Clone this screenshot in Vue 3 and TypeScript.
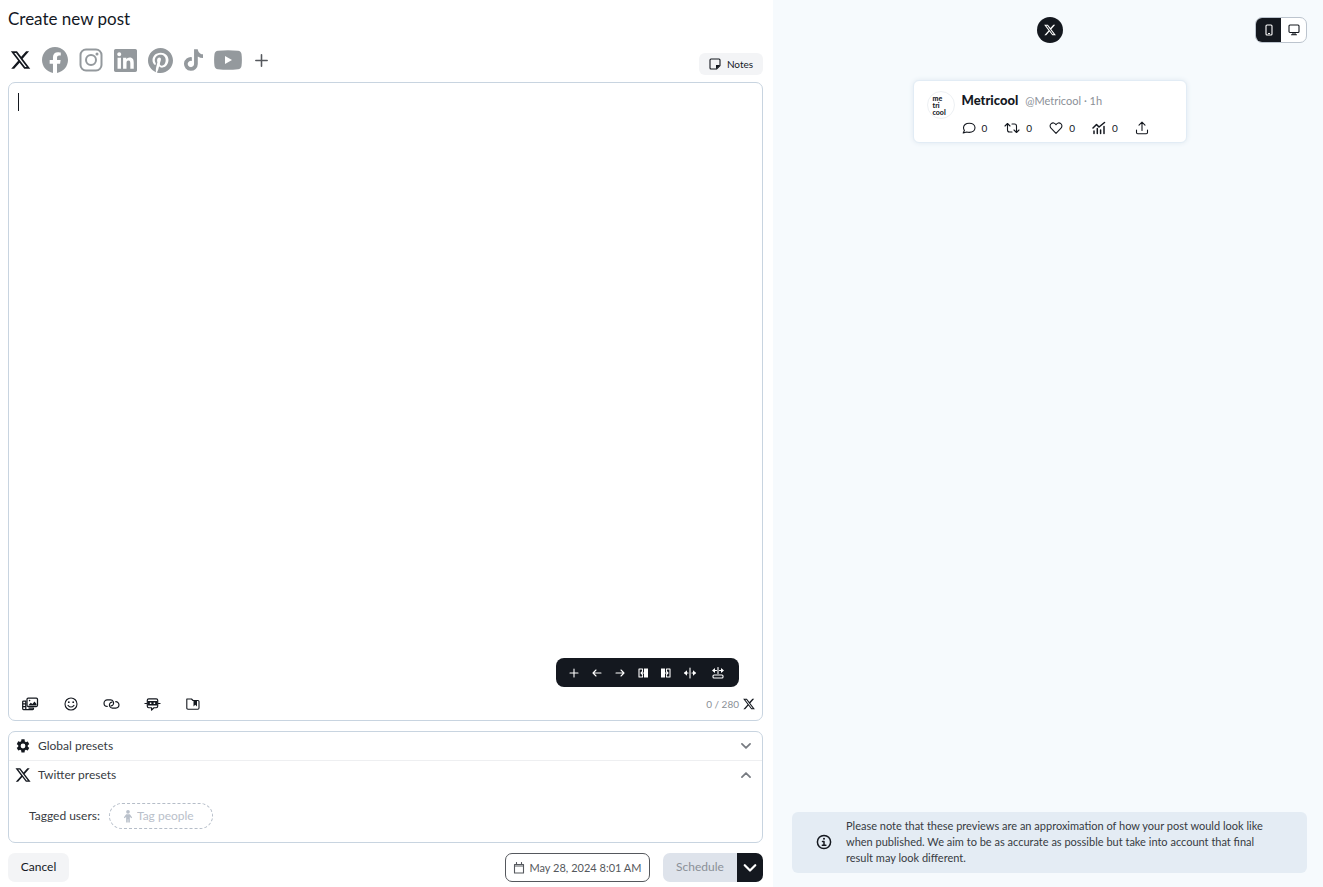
<script setup lang="ts">
import { ref } from 'vue'

interface Network {
  id: string
  label: string
  width: number
  height: number
}

interface Tool {
  id: string
  label: string
  width: number
}

const networks: Network[] = [
  { id: 'x', label: 'X', width: 21, height: 18 },
  { id: 'facebook', label: 'Facebook', width: 26, height: 26 },
  { id: 'instagram', label: 'Instagram', width: 24, height: 24 },
  { id: 'linkedin', label: 'LinkedIn', width: 23, height: 23 },
  { id: 'pinterest', label: 'Pinterest', width: 25, height: 25 },
  { id: 'tiktok', label: 'TikTok', width: 19, height: 22 },
  { id: 'youtube', label: 'YouTube', width: 28, height: 20 },
]

const threadTools: Tool[] = [
  { id: 'plus', label: 'Add post', width: 12 },
  { id: 'left', label: 'Previous post', width: 12 },
  { id: 'right', label: 'Next post', width: 12 },
  { id: 'merge-left', label: 'Merge with previous', width: 12 },
  { id: 'merge-right', label: 'Merge with next', width: 12 },
  { id: 'split', label: 'Split post', width: 14 },
  { id: 'split-all', label: 'Split automatically', width: 14 },
]

const insertTools: Tool[] = [
  { id: 'media', label: 'Media', width: 18 },
  { id: 'smile', label: 'Emoji', width: 16 },
  { id: 'link', label: 'Link', width: 17 },
  { id: 'robot', label: 'Assistant', width: 17 },
  { id: 'folder', label: 'Library', width: 16 },
]

const stats = [
  { id: 'comment', label: 'Replies', count: 0 },
  { id: 'repost', label: 'Reposts', count: 0 },
  { id: 'heart', label: 'Likes', count: 0 },
  { id: 'views', label: 'Views', count: 0 },
]

const selected = ref('x')
const text = ref('')
const tagged = ref('')
const device = ref<'mobile' | 'desktop'>('mobile')
const globalOpen = ref(false)
const twitterOpen = ref(true)
</script>

<template>
  <svg class="sprite" aria-hidden="true">
    <symbol id="x" viewBox="1 2 22 20"><path fill="currentColor" d="M18.244 2.25h3.308l-7.227 8.26 8.502 11.24H16.17l-5.214-6.817L4.99 21.75H1.68l7.73-8.835L1.254 2.25H8.08l4.713 6.231zm-1.161 17.52h1.833L7.084 4.126H5.117z" /></symbol>
    <symbol id="facebook" viewBox="0 0 24 24"><path fill="currentColor" d="M24 12.073c0-6.627-5.373-12-12-12s-12 5.373-12 12c0 5.99 4.388 10.954 10.125 11.854v-8.385H7.078v-3.47h3.047V9.43c0-3.007 1.792-4.669 4.533-4.669 1.312 0 2.686.235 2.686.235v2.953H15.83c-1.491 0-1.956.925-1.956 1.874v2.25h3.328l-.532 3.47h-2.796v8.385C19.612 23.027 24 18.062 24 12.073z" /></symbol>
    <symbol id="instagram" viewBox="0 0 24 24">
      <rect x="1.500" y="1.500" width="21" height="21" rx="5.500" fill="none" stroke="currentColor" stroke-width="2" />
      <circle cx="12" cy="12" r="5" fill="none" stroke="currentColor" stroke-width="2" />
      <circle cx="18" cy="6" r="1.500" fill="currentColor" />
    </symbol>
    <symbol id="linkedin" viewBox="0 32 448 448"><path fill="currentColor" d="M416 32H31.9C14.3 32 0 46.5 0 64.3v383.4C0 465.5 14.3 480 31.9 480H416c17.6 0 32-14.5 32-32.3V64.3c0-17.8-14.4-32.3-32-32.3zM135.4 416H69V202.2h66.5V416zm-33.2-243c-21.3 0-38.5-17.3-38.5-38.5S80.9 96 102.2 96c21.2 0 38.5 17.3 38.5 38.5 0 21.3-17.2 38.5-38.5 38.5zm282.1 243h-66.4V312c0-24.8-.5-56.7-34.5-56.7-34.6 0-39.9 27-39.9 54.9V416h-66.4V202.2h63.7v29.2h.9c8.9-16.8 30.6-34.5 62.9-34.5 67.2 0 79.7 44.3 79.7 101.9V416z" /></symbol>
    <symbol id="pinterest" viewBox="0 8 496 496"><path fill="currentColor" d="M496 256c0 137-111 248-248 248-25.6 0-50.2-3.9-73.4-11.1 10.1-16.5 25.2-43.5 30.8-65 3-11.6 15.4-59 15.4-59 8.1 15.4 31.7 28.5 56.8 28.5 74.8 0 128.7-68.8 128.7-154.3 0-81.9-66.9-143.2-152.9-143.2-107 0-163.9 71.8-163.9 150.1 0 36.4 19.4 81.7 50.3 96.1 4.7 2.2 7.2 1.2 8.3-3.3.8-3.4 5-20.3 6.9-28.1.6-2.5.3-4.7-1.7-7.1-10.1-12.5-18.3-35.3-18.3-56.6 0-54.7 41.4-107.6 112-107.6 60.9 0 103.6 41.5 103.6 100.9 0 67.1-33.9 113.6-78 113.6-24.3 0-42.6-20.1-36.7-44.8 7-29.5 20.5-61.3 20.5-82.6 0-19-10.2-34.9-31.4-34.9-24.9 0-44.9 25.7-44.9 60.2 0 22 7.4 36.8 7.4 36.8s-24.5 103.8-29 123.2c-5 21.4-3 51.6-.9 71.2C65.4 450.9 0 361.1 0 256 0 119 111 8 248 8s248 111 248 248z" /></symbol>
    <symbol id="tiktok" viewBox="0 0 448 512"><path fill="currentColor" d="M448,209.91a210.06,210.06,0,0,1-122.77-39.25V349.38A162.55,162.55,0,1,1,185,188.31V278.2a74.62,74.62,0,1,0,52.23,71.18V0l88,0a121.18,121.18,0,0,0,1.86,22.17h0A122.18,122.18,0,0,0,381,102.39a121.43,121.43,0,0,0,67,20.14Z" /></symbol>
    <symbol id="youtube" viewBox="0 0 28 20"><path fill="currentColor" fill-rule="evenodd" d="M4 .7Q14-.3 24 .7q3 .3 3.500 3.300 .8 6 0 12-.5 3-3.500 3.300-10 1-20 0-3-.3-3.500-3.300-.8-6 0-12Q1 1 4 .7ZM11 6v8l7-4Z" /></symbol>
    <symbol id="plus" viewBox="0 0 12 12"><path class="line" d="M6 2v8M2 6h8" /></symbol>
    <symbol id="left" viewBox="0 0 12 12"><path class="line" d="M10 6H2M5 3 2 6l3 3" /></symbol>
    <symbol id="right" viewBox="0 0 12 12"><path class="line" d="M2 6h8M7 3l3 3-3 3" /></symbol>
    <symbol id="merge-left" viewBox="0 0 12 12">
      <path fill="currentColor" d="M7 1.500h4v9H7Z" />
      <path class="line" d="M5.500 3.500V2H2v8h3.500V8.500M6.500 6H4M5.500 4.500 4 6l1.500 1.500" />
    </symbol>
    <symbol id="merge-right" viewBox="0 0 12 12">
      <path fill="currentColor" d="M1 1.500h4v9H1Z" />
      <path class="line" d="M6.500 3.500V2H10v8H6.500V8.500M5.500 6H8M6.500 4.500 8 6 6.500 7.500" />
    </symbol>
    <symbol id="split" viewBox="0 0 14 12">
      <path class="line" d="M7 1v10M5 6H2M9 6h3" />
      <path fill="currentColor" d="M.8 6 4 3.200v5.600ZM13.200 6 10 3.200v5.600Z" />
    </symbol>
    <symbol id="split-all" viewBox="0 0 14 12">
      <path class="line" d="M7 .5v6M5.500 3.500H3M8.500 3.500H11" />
      <path fill="currentColor" d="M1 3.500 4 1v5ZM13 3.500 10 1v5Z" />
      <rect class="line" x="2" y="8" width="10" height="3" rx="1" />
    </symbol>
    <symbol id="media" viewBox="0 0 18 16">
      <rect x="6" y="2" width="10.500" height="8.500" rx="1.200" class="mid" />
      <path fill="currentColor" d="m7.300 9.500 2.400-2.800 1.700 1.300L13.500 5.500l2 2.500v1.500Z" />
      <circle cx="8.600" cy="4.600" r=".8" fill="currentColor" />
      <path class="mid" d="M4.500 5H2.500q-.8 0-.8.800v6.900q0 .8.800.8h9.200q.8 0 .8-.8M4.800 5v8.500M1.700 7.800h3M1.700 10.600h3M8 12h4.500" />
    </symbol>
    <symbol id="smile" viewBox="0 0 16 16">
      <circle class="line" cx="8" cy="8" r="6" />
      <path class="line" d="M5 9.300q3 3.400 6 0" />
      <circle cx="5.800" cy="6.200" r=".9" fill="currentColor" /><circle cx="10.200" cy="6.200" r=".9" fill="currentColor" />
    </symbol>
    <symbol id="link" viewBox="0 0 18 16">
      <path class="mid" d="M4.500 10.500a3.400 3.400 0 0 1 0-6.800h3.600a3.200 3.200 0 0 1 2.700 4.800q-.8 1.300-2.300 1.500" />
      <path class="mid" d="M13.500 5.500a3.400 3.400 0 0 1 0 6.800H9.900a3.200 3.200 0 0 1-2.700-4.800Q8 6.200 9.500 6" />
    </symbol>
    <symbol id="robot" viewBox="0 0 18 16">
      <path class="mid" d="M5 2.500h8q1.500 0 1.500 1.500v6.500q0 1.500-1.500 1.500h-2.500L8 14.500V12H5q-1.500 0-1.500-1.500V4Q3.500 2.500 5 2.500ZM1 7.500h2.500M14.500 7.500H17" />
      <path fill="currentColor" fill-rule="evenodd" d="M4 4.800h10v4.700H4ZM6.200 6.300v1.600h1.600V6.300Zm4 0v1.600h1.600V6.300Z" />
    </symbol>
    <symbol id="folder" viewBox="0 0 16 16">
      <path class="line" d="M2 3h4.500L8 4.500h5q1 0 1 1V12q0 1.200-1.200 1.200H3Q1.800 13.200 1.800 12V3Z" />
      <path fill="currentColor" d="M8.500 4.500h3.500v6l-1.750-1.700L8.500 10.500Z" />
    </symbol>
    <symbol id="note" viewBox="0 0 12 12">
      <path class="line" d="M2 1h8q1 0 1 1v5.500L7.500 11H2q-1 0-1-1V2q0-1 1-1Z" />
      <path fill="currentColor" d="M11 7H7v4Z" />
    </symbol>
    <symbol id="gear" viewBox="0 0 24 24"><path fill="currentColor" d="M19.140 12.940c.04-.3.060-.61.060-.94s-.02-.64-.07-.94l2.030-1.580a.49.49 0 0 0 .12-.61l-1.920-3.320a.49.49 0 0 0-.59-.22l-2.390.96c-.5-.38-1.030-.7-1.620-.94l-.36-2.540A.48.48 0 0 0 13.920 2h-3.840c-.24 0-.43.17-.47.41l-.36 2.540c-.59.24-1.130.57-1.620.94l-2.390-.96a.48.48 0 0 0-.59.22L2.740 8.870a.48.48 0 0 0 .12.61l2.030 1.580c-.05.3-.09.63-.09.94s.02.64.07.94l-2.030 1.580a.49.49 0 0 0-.12.61l1.920 3.320c.12.22.37.29.59.22l2.390-.96c.5.38 1.030.7 1.620.94l.36 2.540c.05.24.24.41.48.41h3.840c.24 0 .44-.17.47-.41l.36-2.540c.59-.24 1.130-.56 1.620-.94l2.390.96c.22.08.47 0 .59-.22l1.920-3.320a.48.48 0 0 0-.12-.61ZM12 15.600a3.600 3.600 0 1 1 0-7.200 3.600 3.600 0 0 1 0 7.200Z" /></symbol>
    <symbol id="chevron" viewBox="0 0 12 12"><path class="bold" d="m2.500 4.200 3.500 3.500 3.500-3.500" /></symbol>
    <symbol id="person" viewBox="0 0 10 14">
      <circle cx="5" cy="2" r="2" fill="currentColor" />
      <path fill="currentColor" d="M3 4.500h4L9.500 8l-1 .8L7 7.200V13.500H5.300V10h-.6v3.500H3V7.200L1.500 8.800.5 8Z" />
    </symbol>
    <symbol id="calendar" viewBox="0 0 12 12"><path class="line" d="M1.500 2.500h9v8.500h-9ZM1.500 4h9M3.500.5v2M8.500.5v2" /></symbol>
    <symbol id="mobile" viewBox="0 0 12 12">
      <rect class="line" x="3" y="1" width="6" height="10" rx="1" /><path class="line" d="M5.500 9.500h1" />
    </symbol>
    <symbol id="desktop" viewBox="0 0 12 12">
      <rect class="line" x="1" y="1" width="10" height="7.500" rx="1" /><path class="line" d="M5 8.500V10.500M7 8.500v2M3.500 10.700h5" />
    </symbol>
    <symbol id="comment" viewBox="0 0 14 14"><path class="line" d="M7.200 2.200c3.400 0 5.800 2 5.800 4.600s-2.400 4.600-5.800 4.600q-1.300 0-2.500-.4L1.200 12l1.200-2.600Q1.500 8.300 1.500 6.800c0-2.600 2.300-4.600 5.700-4.600Z" /></symbol>
    <symbol id="repost" viewBox="0 0 16 14"><path class="line" d="M1 5l2.500-2.500L6 5M3.500 2.500V9q0 2 2 2H8M8 3h2.500q2 0 2 2v6.500M10 9l2.500 2.500L15 9" /></symbol>
    <symbol id="heart" viewBox="0 0 14 14"><path class="line" d="M7 12.300 2 7.200C.7 5.700.8 3.700 2.200 2.600 3.700 1.400 5.800 1.700 7 3.700c1.200-2 3.300-2.300 4.800-1.100 1.400 1.100 1.500 3.100.2 4.600Z" /></symbol>
    <symbol id="views" viewBox="0 0 14 14"><path class="bold" d="m1 7 3.500-3.500L7 6l5.500-4.500M2 12.500V10M5.300 12.500V7.500M8.600 12.500V9M12 12.500V5.500" /></symbol>
    <symbol id="share" viewBox="0 0 14 14"><path class="line" d="M7 9.500V1.500M4 4.200l3-3 3 3M1.500 9v2.500q0 1.200 1.200 1.200h8.600q1.200 0 1.200-1.200V9" /></symbol>
    <symbol id="info" viewBox="0 0 16 16">
      <circle class="bold" cx="8" cy="8" r="6.600" />
      <path class="bold" d="M6.500 7.500H8v3.500M6.300 11.200h3.600" /><circle cx="8" cy="4.800" r="1" fill="currentColor" />
    </symbol>
  </svg>

  <div class="page">
    <main class="composer">
      <h1>Create new post</h1>

      <div class="top-row">
        <div class="networks">
          <button
            v-for="n in networks"
            :key="n.id"
            type="button"
            class="network"
            :class="{ active: selected === n.id }"
            :aria-label="n.label"
            @click="selected = n.id"
          >
            <svg :width="n.width" :height="n.height"><use :href="'#' + n.id" /></svg>
          </button>
          <button type="button" class="network add" aria-label="Add network">
            <svg width="17" height="17"><use href="#plus" /></svg>
          </button>
        </div>
        <button type="button" class="notes">
          <svg width="12" height="12"><use href="#note" /></svg>
          Notes
        </button>
      </div>

      <section class="editor">
        <div class="field">
          <textarea v-model="text" aria-label="Post text"></textarea>
          <span v-if="!text" class="caret"></span>
        </div>
        <div class="thread-bar">
          <button v-for="t in threadTools" :key="t.id" type="button" :aria-label="t.label">
            <svg :width="t.width" height="12"><use :href="'#' + t.id" /></svg>
          </button>
        </div>
        <div class="insert-bar">
          <div class="insert-tools">
            <button v-for="t in insertTools" :key="t.id" type="button" :aria-label="t.label">
              <svg :width="t.width" height="16"><use :href="'#' + t.id" /></svg>
            </button>
          </div>
          <div class="counter">
            <span>{{ text.length }} / 280</span>
            <svg width="12" height="12"><use href="#x" /></svg>
          </div>
        </div>
      </section>

      <section class="presets">
        <button type="button" class="preset-head" :aria-expanded="globalOpen" @click="globalOpen = !globalOpen">
          <svg width="16" height="16"><use href="#gear" /></svg>
          <span>Global presets</span>
          <svg class="chevron" :class="{ open: globalOpen }" width="14" height="14"><use href="#chevron" /></svg>
        </button>
        <button type="button" class="preset-head second" :aria-expanded="twitterOpen" @click="twitterOpen = !twitterOpen">
          <svg width="16" height="14"><use href="#x" /></svg>
          <span>Twitter presets</span>
          <svg class="chevron" :class="{ open: twitterOpen }" width="14" height="14"><use href="#chevron" /></svg>
        </button>
        <div v-if="twitterOpen" class="preset-body">
          <label for="tagged">Tagged users:</label>
          <div class="tag-box">
            <svg width="10" height="13"><use href="#person" /></svg>
            <input id="tagged" v-model="tagged" type="text" placeholder="Tag people" />
          </div>
        </div>
      </section>

      <footer>
        <button type="button" class="cancel">Cancel</button>
        <button type="button" class="date">
          <svg width="12" height="12"><use href="#calendar" /></svg>
          May 28, 2024 8:01 AM
        </button>
        <div class="schedule">
          <button type="button" class="submit" disabled>Schedule</button>
          <button type="button" class="more" aria-label="More options">
            <svg width="18" height="18"><use href="#chevron" /></svg>
          </button>
        </div>
      </footer>
    </main>

    <aside class="preview">
      <header>
        <button type="button" class="badge" aria-label="X preview">
          <svg width="12" height="12"><use href="#x" /></svg>
        </button>
        <div class="devices">
          <button type="button" :class="{ on: device === 'mobile' }" aria-label="Mobile" @click="device = 'mobile'">
            <svg width="12" height="12"><use href="#mobile" /></svg>
          </button>
          <button type="button" :class="{ on: device === 'desktop' }" aria-label="Desktop" @click="device = 'desktop'">
            <svg width="12" height="12"><use href="#desktop" /></svg>
          </button>
        </div>
      </header>

      <article class="card">
        <div class="avatar"><span>me</span><span>tri</span><span>cool</span></div>
        <div class="card-body">
          <div class="author"><strong>Metricool</strong><span>@Metricool · 1h</span></div>
          <div class="stats">
            <button v-for="s in stats" :key="s.id" type="button" :aria-label="s.label">
              <svg :width="s.id === 'repost' ? 16 : 14" height="14"><use :href="'#' + s.id" /></svg>
              {{ s.count }}
            </button>
            <button type="button" aria-label="Share"><svg width="14" height="14"><use href="#share" /></svg></button>
          </div>
        </div>
      </article>

      <div class="notice">
        <svg width="16" height="16"><use href="#info" /></svg>
        <p>Please note that these previews are an approximation of how your post would look like when published. We aim to be as accurate as possible but take into account that final result may look different.</p>
      </div>
    </aside>
  </div>
</template>

<style scoped>
.sprite {
  position: absolute;
  width: 0;
  height: 0;
}
.line,
.mid,
.bold {
  fill: none;
  stroke: currentColor;
  stroke-width: 1.1;
  stroke-linecap: round;
  stroke-linejoin: round;
}
.mid {
  stroke-width: 1.25;
}
.bold {
  stroke-width: 1.5;
}
.page {
  display: grid;
  grid-template-columns: 773fr 550fr;
  min-height: 100vh;
  font-family: Lato, "Open Sans", sans-serif;
  font-size: 12px;
  color: #14181f;
  background: #fff;
}
button,
input,
textarea {
  font: inherit;
  color: inherit;
  padding: 0;
  margin: 0;
  border: 0;
  background: none;
}
button {
  display: flex;
  align-items: center;
  justify-content: center;
  cursor: pointer;
}
svg {
  display: block;
  flex: none;
}
.composer {
  display: flex;
  flex-direction: column;
  padding: 8px 10px 5px 8px;
}
h1 {
  margin: 0;
  font-size: 17px;
  line-height: 22px;
  font-weight: 400;
}
.top-row {
  display: flex;
  align-items: center;
  justify-content: space-between;
  height: 52px;
}
.networks {
  display: flex;
  align-items: center;
  gap: 11px;
  padding: 8px 0 0 2px;
}
.network {
  color: #94999d;
}
.network.active {
  color: #14181f;
}
.network.add {
  color: #55585d;
}
.notes {
  gap: 6px;
  align-self: flex-end;
  width: 64px;
  height: 22px;
  margin-bottom: 7px;
  font-size: 10px;
  border-radius: 6px;
  background: #f3f4f6;
}
.editor {
  display: flex;
  flex-direction: column;
  flex: 1;
  border: 1px solid #c8d4e0;
  border-radius: 7px;
}
.field {
  position: relative;
  display: flex;
  flex: 1;
}
textarea {
  flex: 1;
  padding: 10px;
  resize: none;
  outline: none;
  font-size: 14px;
  border-radius: 7px;
}
.caret {
  position: absolute;
  top: 10px;
  left: 9px;
  width: 1px;
  height: 18px;
  background: #14181f;
}
.thread-bar {
  display: flex;
  align-items: center;
  align-self: flex-end;
  gap: 11px;
  height: 29px;
  padding: 0 14px 0 12px;
  margin-right: 23px;
  border-radius: 8px;
  color: #fff;
  background: #14181f;
}
.thread-bar button:last-child {
  margin-left: 3px;
}
.insert-bar {
  display: flex;
  align-items: center;
  justify-content: space-between;
  height: 33px;
  padding: 0 7px 0 12px;
}
.insert-tools {
  display: flex;
  gap: 24px;
}
.counter {
  display: flex;
  align-items: center;
  gap: 4px;
  font-size: 10px;
}
.counter span {
  color: #8b9097;
}
.presets {
  margin-top: 10px;
  border: 1px solid #c8d4e0;
  border-radius: 7px;
}
.preset-head {
  width: 100%;
  height: 28px;
  gap: 7px;
  padding: 0 9px 0 6px;
  font-size: 12px;
}
.preset-head span {
  flex: 1;
  padding-bottom: 2px;
  text-align: left;
  color: #373b42;
}
.preset-head.second {
  height: 29px;
  border-top: 1px solid #eeeff1;
}
.chevron {
  color: #777b81;
}
.chevron.open {
  transform: rotate(180deg);
}
.preset-body {
  display: flex;
  align-items: center;
  gap: 9px;
  padding: 14px 20px 13px;
  color: #373b42;
}
.preset-body label,
.tag-box input {
  padding-bottom: 2px;
}
.tag-box {
  display: flex;
  align-items: center;
  gap: 4px;
  box-sizing: border-box;
  width: 104px;
  height: 26px;
  padding: 0 13px;
  border: 1px dashed #b5bdc8;
  border-radius: 13px;
  color: #b9c0ca;
}
.tag-box input {
  flex: 1;
  min-width: 0;
  outline: none;
}
.tag-box input::placeholder {
  color: #b9c0ca;
}
footer {
  display: flex;
  align-items: center;
  height: 29px;
  margin-top: 10px;
}
.cancel {
  width: 61px;
  height: 29px;
  margin-right: auto;
  border-radius: 7px;
  background: #f3f4f6;
}
.date {
  box-sizing: border-box;
  gap: 4px;
  min-width: 145px;
  height: 29px;
  padding: 0 5px;
  font-size: 11px;
  border: 1px solid #55585d;
  border-radius: 7px;
  color: #55585d;
}
.schedule {
  display: flex;
  height: 29px;
  margin-left: 13px;
  border-radius: 7px;
  overflow: hidden;
}
.submit {
  width: 74px;
  color: #8b9097;
  background: #dee3eb;
}
.cancel,
.submit {
  padding-bottom: 2px;
}
.more {
  width: 26px;
  color: #fff;
  background: #14181f;
}
.preview {
  display: flex;
  flex-direction: column;
  padding: 17px 16px 14px 19px;
  background: #f6fafd;
}
header {
  display: grid;
  grid-template-columns: 1fr auto 1fr;
  align-items: center;
}
.badge {
  grid-column: 2;
  width: 26px;
  height: 26px;
  border-radius: 50%;
  color: #fff;
  background: #14181f;
}
.devices {
  display: flex;
  justify-self: end;
  box-sizing: border-box;
  height: 26px;
  border: 1px solid #bcc4ce;
  border-radius: 7px;
  background: #fff;
  overflow: hidden;
}
.devices button {
  width: 25px;
}
.devices .on {
  color: #fff;
  background: #14181f;
}
.card {
  display: flex;
  gap: 7px;
  align-self: center;
  box-sizing: border-box;
  width: 274px;
  margin-top: 37px;
  padding: 10px 13px 6px;
  border: 1px solid #e2ecf5;
  border-radius: 6px;
  background: #fff;
  box-shadow: 0 0 5px #dfe8f0;
}
.avatar {
  display: flex;
  flex-direction: column;
  justify-content: center;
  box-sizing: border-box;
  width: 28px;
  height: 28px;
  padding-left: 5px;
  border: 1px solid #edf0f3;
  border-radius: 50%;
  font-size: 7px;
  line-height: 7px;
  font-weight: 900;
}
.author {
  display: flex;
  align-items: center;
  gap: 7px;
  height: 18px;
}
.author strong {
  font-size: 13px;
  font-weight: 900;
}
.author span {
  font-size: 11px;
  color: #8b9097;
}
.stats {
  display: flex;
  gap: 17px;
  margin-top: 11px;
}
.stats button {
  gap: 6px;
  height: 16px;
  font-size: 10px;
}
.notice {
  display: flex;
  align-items: center;
  gap: 14px;
  margin-top: auto;
  padding: 6px 28px 7px 24px;
  border-radius: 6px;
  background: #e4ecf4;
}
.notice p {
  margin: 0;
  font-size: 11px;
  line-height: 16px;
  color: #373b42;
}
</style>

<style>
body {
  margin: 0;
}
</style>
